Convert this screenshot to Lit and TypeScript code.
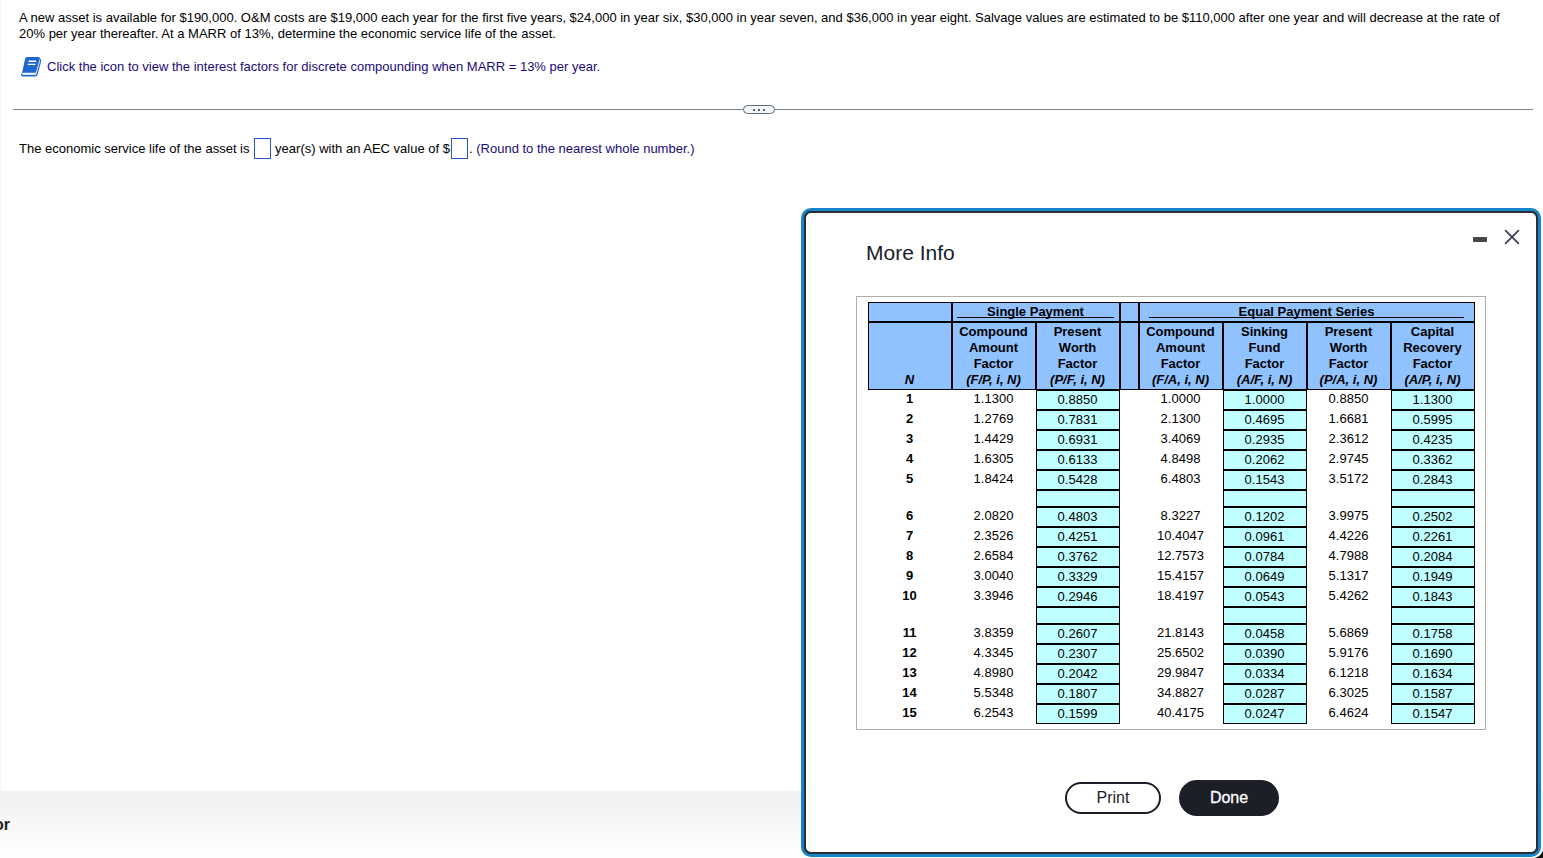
import { LitElement, html, css, svg, nothing } from "lit";
import { customElement } from "lit/decorators.js";
import { classMap } from "lit/directives/class-map.js";

const FACTORS: string[][] = [
  ["1", "1.1300", "0.8850", "", "1.0000", "1.0000", "0.8850", "1.1300"],
  ["2", "1.2769", "0.7831", "", "2.1300", "0.4695", "1.6681", "0.5995"],
  ["3", "1.4429", "0.6931", "", "3.4069", "0.2935", "2.3612", "0.4235"],
  ["4", "1.6305", "0.6133", "", "4.8498", "0.2062", "2.9745", "0.3362"],
  ["5", "1.8424", "0.5428", "", "6.4803", "0.1543", "3.5172", "0.2843"],
  [],
  ["6", "2.0820", "0.4803", "", "8.3227", "0.1202", "3.9975", "0.2502"],
  ["7", "2.3526", "0.4251", "", "10.4047", "0.0961", "4.4226", "0.2261"],
  ["8", "2.6584", "0.3762", "", "12.7573", "0.0784", "4.7988", "0.2084"],
  ["9", "3.0040", "0.3329", "", "15.4157", "0.0649", "5.1317", "0.1949"],
  ["10", "3.3946", "0.2946", "", "18.4197", "0.0543", "5.4262", "0.1843"],
  [],
  ["11", "3.8359", "0.2607", "", "21.8143", "0.0458", "5.6869", "0.1758"],
  ["12", "4.3345", "0.2307", "", "25.6502", "0.0390", "5.9176", "0.1690"],
  ["13", "4.8980", "0.2042", "", "29.9847", "0.0334", "6.1218", "0.1634"],
  ["14", "5.5348", "0.1807", "", "34.8827", "0.0287", "6.3025", "0.1587"],
  ["15", "6.2543", "0.1599", "", "40.4175", "0.0247", "6.4624", "0.1547"],
];

const COLUMNS: (string[] | null)[] = [
  ["Compound", "Amount", "Factor", "(F/P, i, N)"],
  ["Present", "Worth", "Factor", "(P/F, i, N)"],
  null,
  ["Compound", "Amount", "Factor", "(F/A, i, N)"],
  ["Sinking", "Fund", "Factor", "(A/F, i, N)"],
  ["Present", "Worth", "Factor", "(P/A, i, N)"],
  ["Capital", "Recovery", "Factor", "(A/P, i, N)"],
];

// Columns drawn as boxed cyan cells.
const BOXED = new Set([2, 5, 7]);

@customElement("factor-table")
export class FactorTable extends LitElement {
  static styles = css`
    :host {
      display: block;
    }
    table {
      width: 100%;
      table-layout: fixed;
      border-collapse: separate;
      border-spacing: 0;
      font-size: 13px;
      line-height: 16px;
      color: #000;
      text-align: center;
    }
    .spacer {
      width: 19px;
    }
    th,
    td {
      box-sizing: border-box;
      height: 20px;
      padding: 1px 1px 1px 0;
      vertical-align: top;
    }
    thead th,
    thead td {
      background: #8fc2ff;
      border: 1px solid #000;
    }
    thead .index {
      vertical-align: bottom;
      font-style: italic;
    }
    .group {
      box-sizing: border-box;
      height: 14px;
      margin: 0 4px;
      border-bottom: 1px solid #000;
    }
    .group.wide {
      margin: 0 9px;
    }
    .line {
      display: block;
    }
    .symbol {
      font-style: italic;
    }
    .boxed {
      background: #bfffff;
      border: 1px solid #000;
    }
    .gap td {
      height: 17px;
      padding: 0;
    }
  `;

  render() {
    return html`
      <table aria-label="Interest factors for discrete compounding">
        <colgroup>
          <col />
          <col />
          <col />
          <col class="spacer" />
          <col />
          <col />
          <col />
          <col />
        </colgroup>
        <thead>
          <tr>
            <td></td>
            <th colspan="2" scope="colgroup"><div class="group">Single Payment</div></th>
            <td></td>
            <th colspan="4" scope="colgroup"><div class="group wide">Equal Payment Series</div></th>
          </tr>
          <tr>
            <th class="index" scope="col">N</th>
            ${COLUMNS.map((lines) =>
              lines
                ? html`<th scope="col">
                    ${lines.map(
                      (text, i) =>
                        html`<span class=${classMap({ line: true, symbol: i === 3 })}>${text}</span>`
                    )}
                  </th>`
                : html`<td></td>`
            )}
          </tr>
        </thead>
        <tbody>
          ${FACTORS.map((row) =>
            row.length
              ? html`<tr>
                  ${row.map((value, i) =>
                    i === 0
                      ? html`<th scope="row">${value}</th>`
                      : html`<td class=${BOXED.has(i) ? "boxed" : nothing}>${value}</td>`
                  )}
                </tr>`
              : html`<tr class="gap">
                  ${[0, 1, 2, 3, 4, 5, 6, 7].map(
                    (i) => html`<td class=${BOXED.has(i) ? "boxed" : nothing}></td>`
                  )}
                </tr>`
          )}
        </tbody>
      </table>
    `;
  }
}

@customElement("info-dialog")
export class InfoDialog extends LitElement {
  static styles = css`
    :host {
      display: block;
      box-sizing: border-box;
      border: 3px solid #1585c8;
      border-radius: 10px;
      background: #2b2f33;
    }
    .panel {
      box-sizing: border-box;
      height: 100%;
      border: 2px solid #2b2f33;
      border-radius: 7px;
      background: #fff;
      padding: 0 50px;
    }
    header {
      display: flex;
      justify-content: space-between;
      align-items: flex-start;
      height: 83px;
      padding-left: 10px;
    }
    h2 {
      margin: 0;
      padding-top: 28px;
      font-size: 21px;
      line-height: 24px;
      font-weight: 400;
      color: #141c2e;
    }
    .controls {
      display: flex;
      gap: 12px;
      padding-top: 14px;
      margin-right: -36px;
    }
    .control {
      display: block;
      width: 20px;
      height: 20px;
      padding: 0;
      border: 0;
      background: none;
    }
    .control svg {
      display: block;
    }
    .frame {
      border: 1px solid #adadad;
      padding: 5px 10px 5px 11px;
    }
    footer {
      display: flex;
      justify-content: center;
      align-items: center;
      gap: 18px;
      padding: 50px 0 0 2px;
    }
    .action {
      box-sizing: border-box;
      width: 96px;
      height: 32px;
      padding: 0;
      border: 2px solid #1c1f28;
      border-radius: 18px;
      background: #fff;
      color: #1c1f28;
      font: inherit;
      font-size: 16px;
      line-height: 20px;
    }
    .primary {
      width: 100px;
      height: 36px;
      background: #1c1f28;
      color: #fff;
      -webkit-text-stroke: 0.3px #fff;
    }
  `;

  render() {
    return html`
      <section class="panel" role="dialog" aria-labelledby="title">
        <header>
          <h2 id="title">More Info</h2>
          <div class="controls">
            <button class="control" aria-label="Minimize">
              <svg width="20" height="20" viewBox="0 0 20 20">
                <rect x="3" y="10" width="14" height="5" rx="1" fill="#43484d" />
              </svg>
            </button>
            <button class="control" aria-label="Close">
              <svg width="20" height="20" viewBox="0 0 20 20">
                <path d="M3.6 3.6 16.4 16.4M16.4 3.6 3.6 16.4" fill="none" stroke="#3a4453" stroke-width="1.8" stroke-linecap="round" />
              </svg>
            </button>
          </div>
        </header>
        <div class="frame"><factor-table></factor-table></div>
        <footer>
          <button class="action">Print</button>
          <button class="action primary">Done</button>
        </footer>
      </section>
    `;
  }
}

const bookIcon = svg`
  <path d="M6 0H17.6Q19.3 0 18.9 1.6L15.6 14.4Q15.2 15.8 13.8 15.8H2.6Q1.2 15.8 .8 17L4.2 1.6Q4.6 0 6 0Z" fill="#2166d1" />
  <path d="M18.8 2.4Q19.7 2.8 19.4 4.2L16.3 16.4Q15.8 18.8 13.6 18.8H2.4Q.4 18.8 .8 16.6" fill="none" stroke="#2166d1" stroke-width="1.4" />
  <path d="M1.8 17.2H13.4Q15 17.2 15.4 15.8L18.8 3.2" fill="none" stroke="#c3d9f7" stroke-width="1" />
  <path d="M7.6 4.2H15.2M6.8 7.4H14.4" stroke="#fff" stroke-width="1.4" />
`;

@customElement("app-root")
export class AppRoot extends LitElement {
  static styles = css`
    :host {
      display: block;
      position: relative;
      min-height: 100vh;
      background: #111;
      font-family: "Liberation Sans", Arial, Helvetica, sans-serif;
      font-size: 13px;
      line-height: 16px;
      color: #000;
    }
    .page {
      display: flex;
      flex-direction: column;
      min-height: 100vh;
      background: #fff;
      border-bottom-right-radius: 10px;
      overflow: hidden;
    }
    main {
      flex: 1;
      border-left: 1px solid #f5f5f5;
      padding: 10px 10px 0 12px;
    }
    .problem,
    .reference,
    .answer {
      margin: 0;
      padding-left: 6px;
    }
    .problem {
      padding-right: 20px;
    }
    .reference {
      display: flex;
      align-items: center;
      gap: 6px;
      padding: 15px 0 0 8px;
    }
    .reference a {
      color: #1b0a78;
      text-decoration: none;
    }
    .reference svg {
      display: block;
      height: 20px;
    }
    .divider {
      display: flex;
      align-items: center;
      margin-top: 28px;
      height: 9px;
    }
    .rule {
      flex: 1;
      height: 1px;
      background: #76838f;
    }
    .rule.start {
      flex-grow: 730;
    }
    .rule.end {
      flex-grow: 758;
    }
    .grip {
      display: flex;
      justify-content: center;
      align-items: center;
      gap: 3px;
      box-sizing: border-box;
      width: 32px;
      height: 9px;
      padding: 0;
      border: 1px solid #5d6b78;
      border-radius: 5px;
      background: #f3f5f7;
    }
    .dot {
      width: 2px;
      height: 2px;
      background: #56626e;
    }
    .answer {
      display: flex;
      align-items: center;
      white-space: pre;
      padding-top: 24px;
    }
    .answer input {
      box-sizing: border-box;
      width: 17px;
      height: 21px;
      margin: 0 1px;
      padding: 0;
      border: 1px solid #2a56c6;
      border-radius: 0;
      background: #fff;
      font: inherit;
      outline: none;
    }
    .first {
      padding-right: 3px;
    }
    .hint {
      color: #1b0a78;
    }
    .bar {
      height: 67px;
      box-sizing: border-box;
      padding-top: 24px;
      background: linear-gradient(#f0f0f0, #fff);
      font-size: 16px;
      line-height: 20px;
      font-weight: 700;
      color: #222;
    }
    .bar span {
      display: block;
      margin-left: -6px;
    }
    info-dialog {
      position: absolute;
      top: 208px;
      right: 2px;
      bottom: 1px;
      width: 740px;
    }
  `;

  render() {
    return html`
      <div class="page">
        <main>
          <p class="problem">
            A new asset is available for $190,000. O&amp;M costs are $19,000 each year for the first five years, $24,000 in
            year six, $30,000 in year seven, and $36,000 in year eight. Salvage values are estimated to be $110,000 after
            one year and will decrease at the rate of 20% per year thereafter. At a MARR of 13%, determine the economic
            service life of the asset.
          </p>
          <p class="reference">
            <svg width="20" height="20" viewBox="0 0 20 20" aria-hidden="true">${bookIcon}</svg>
            <a href="#factors">Click the icon to view the interest factors for discrete compounding when MARR = 13% per year.</a>
          </p>
          <div class="divider">
            <span class="rule start"></span>
            <button class="grip" aria-label="Resize panels">
              <span class="dot"></span><span class="dot"></span><span class="dot"></span>
            </button>
            <span class="rule end"></span>
          </div>
          <div class="answer"><label class="first" for="life">The economic service life of the asset is</label><input id="life" type="text" /><label for="aec"> year(s) with an AEC value of $</label><input id="aec" type="text" /><span>. </span><span class="hint">(Round to the nearest whole number.)</span></div>
        </main>
        <div class="bar"><span>or</span></div>
      </div>
      <info-dialog></info-dialog>
    `;
  }
}
